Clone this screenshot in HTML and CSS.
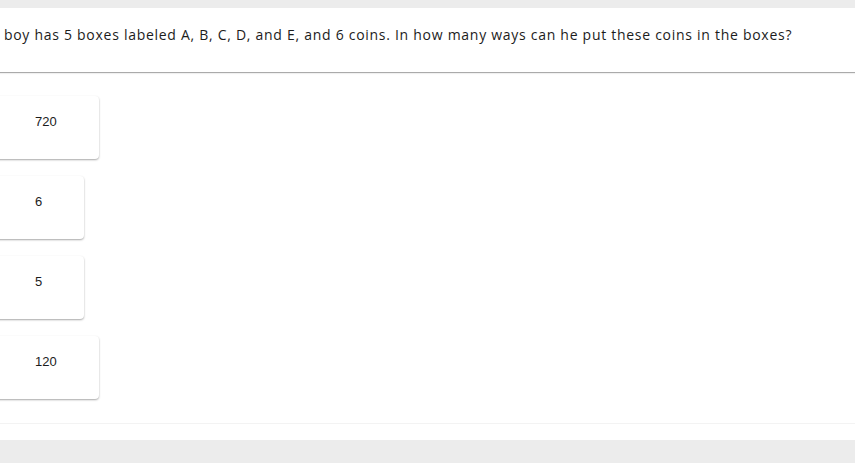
FILE: index.html
```html
<!DOCTYPE html>
<html lang="en">
<head>
    <meta charset="UTF-8">
    <meta name="viewport" content="width=device-width, initial-scale=1.0">
    <title>Quiz</title>
    <link rel="stylesheet" href="styles.css">
</head>
<body>
    <div id="quiz">
        <div id="question">A boy has 5 boxes labeled A, B, C, D, and E, and 6 coins. In how many ways can he put these coins in the boxes?</div>
        <div id="answers">
            <button class="answerButton">720</button>
            <button class="answerButton">6</button>
            <button class="answerButton">5</button>
            <button class="answerButton">120</button>
        </div>
    </div>
</body>
</html>
```

FILE: styles.css
```css
body {
    margin: 0;
    background-color: #ececec;
    font-family: 'Open Sans', sans-serif;
    color: #1c1c1c;
}

#quiz {
    margin-top: 8px;
    height: 432px;
    background-color: #fff;
    overflow: hidden;
}

#question {
    padding: 16px 0 27px 0;
    text-indent: -10px;
    font-size: 14px;
    line-height: 21px;
    letter-spacing: 0.72px;
    border-bottom: 1px solid #aaa;
    box-shadow: 0 1px 1px rgba(0, 0, 0, 0.06);
}

#answers {
    display: flex;
    flex-direction: column;
    align-items: flex-start;
    gap: 17px;
    padding-top: 23px;
    padding-bottom: 24px;
    border-bottom: 1px solid #f3f3f3;
}

.answerButton {
    margin-left: -7px;
    padding: 16px 42px 27px 42px;
    font-family: 'Liberation Sans', Arial, sans-serif;
    font-size: 13px;
    line-height: 20px;
    color: #1c1c1c;
    background-color: #fff;
    border: none;
    border-radius: 4px;
    box-shadow: 0 1px 2px rgba(0, 0, 0, 0.35);
    cursor: pointer;
}
```
